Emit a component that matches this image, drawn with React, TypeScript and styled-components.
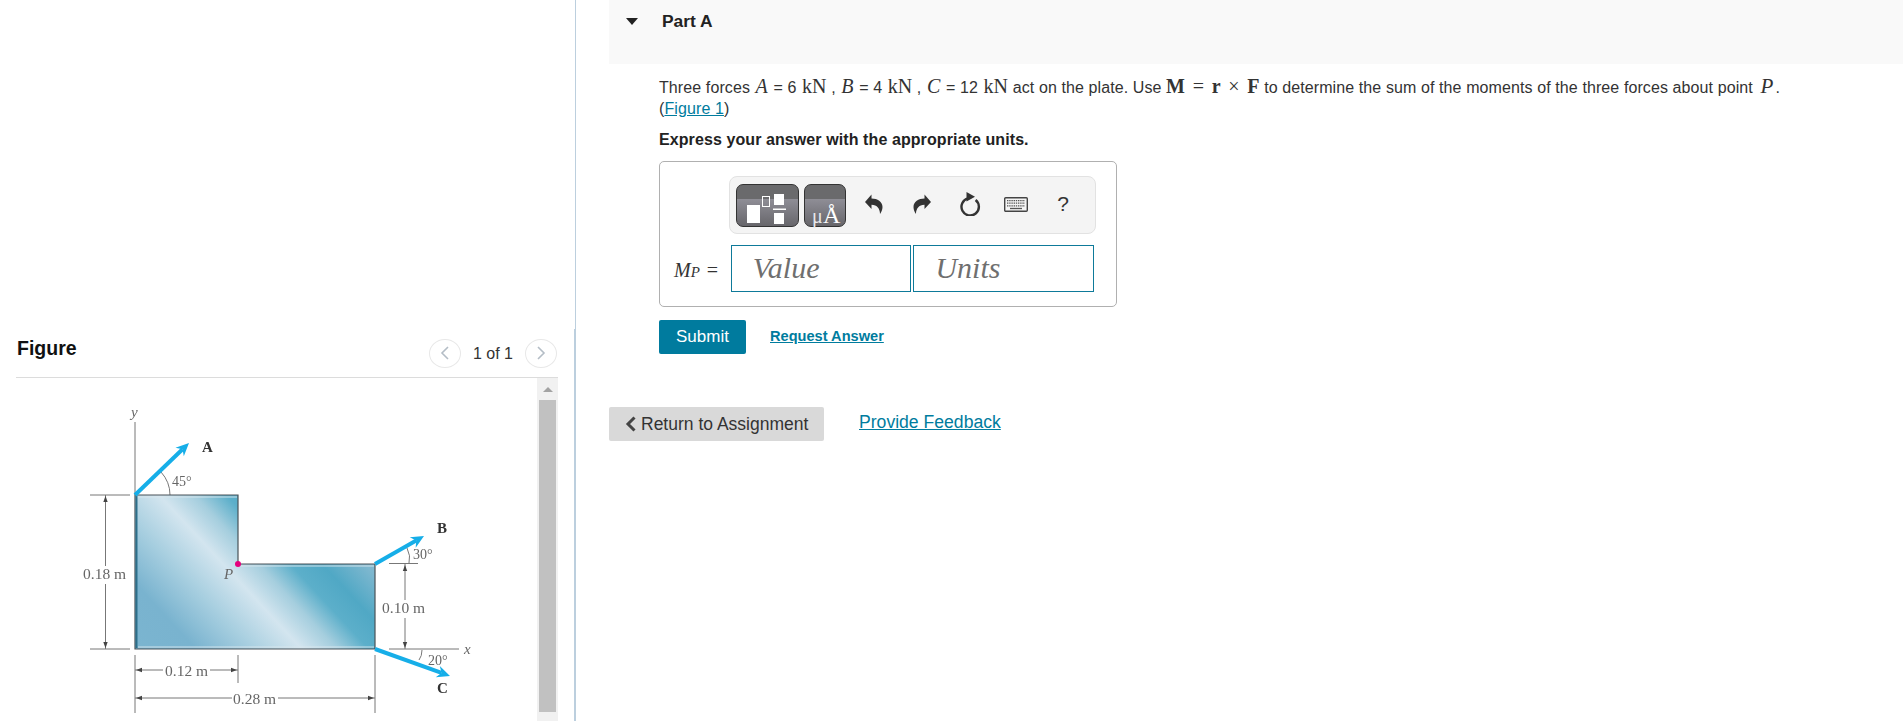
import React from "react";
import styled, { createGlobalStyle } from "styled-components";

const Global = createGlobalStyle`
  html, body { margin: 0; padding: 0; background: #fff; height: 100%; overflow: hidden; }
  body { font-family: "Liberation Sans", Arial, sans-serif; color: #333; }
`;

const Page = styled.div`
  display: flex;
  width: 1903px;
  height: 721px;
  overflow: hidden;
`;

const FigurePanel = styled.aside`
  box-sizing: border-box;
  width: 576px;
  height: 721px;
  padding-top: 329px;
  border-right: 1px solid #bccfde;
  display: flex;
`;

const FigureColumn = styled.div`
  box-sizing: border-box;
  width: 575px;
  padding: 0 16px;
  border-right: 1px solid #bccfde;
  display: flex;
  flex-direction: column;
`;

const FigureHeader = styled.header`
  display: flex;
  align-items: center;
  justify-content: space-between;
  height: 49px;
  box-sizing: border-box;
  border-bottom: 1px solid #dcdcdc;
`;

const FigureTitle = styled.h2`
  margin: 0 0 10px 1px;
  font-size: 19.5px;
  font-weight: 700;
  color: #111;
`;

const Pager = styled.div`
  display: flex;
  align-items: center;
  gap: 12px;
  padding-right: 1px;
`;

const PagerButton = styled.span`
  width: 32px;
  height: 29px;
  box-sizing: border-box;
  border: 1px solid #e8e8e8;
  border-radius: 50%;
  display: flex;
  align-items: center;
  justify-content: center;
  color: #b4bdc6;
`;

const PagerText = styled.span`
  font-size: 16px;
  color: #333;
  margin-top: 2px;
`;

const FigureBody = styled.div`
  position: relative;
  flex: 1;
  overflow: hidden;
`;

const Diagram = styled.svg`
  display: block;
  width: 521px;
  height: 343px;
  filter: blur(0.45px);
`;

const ScrollTrack = styled.div`
  position: absolute;
  right: 0;
  top: 0;
  bottom: 0;
  width: 21px;
  background: #f1f1f1;
  display: flex;
  flex-direction: column;
  align-items: center;
`;

const ScrollArrow = styled.span`
  margin-top: 9px;
  width: 0;
  height: 0;
  border-left: 5px solid transparent;
  border-right: 5px solid transparent;
  border-bottom: 5px solid #a3a3a3;
`;

const ScrollThumb = styled.div`
  margin-top: 8px;
  width: 17px;
  height: 312px;
  background: #c1c1c1;
`;

const Main = styled.main`
  flex: 1;
  padding-left: 33px;
  min-width: 0;
`;

const PartBar = styled.div`
  height: 64px;
  background: #f9f9f9;
  display: flex;
  align-items: flex-start;
  padding-top: 11px;
  box-sizing: border-box;
`;

const Caret = styled.span`
  margin: 7px 0 0 17px;
  width: 0;
  height: 0;
  border-left: 6.5px solid transparent;
  border-right: 6.5px solid transparent;
  border-top: 7px solid #222;
`;

const PartTitle = styled.span`
  margin-left: 24px;
  font-size: 17.4px;
  font-weight: 700;
  color: #222;
`;

const Content = styled.section`
  padding: 12px 0 0 50px;
`;

const Prompt = styled.p`
  margin: 0;
  font-size: 16px;
  letter-spacing: 0.1px;
  line-height: 20.5px;
  color: #333;
`;

const mathFont = `"Liberation Serif", "DejaVu Serif", serif`;

const MathVar = styled.span`
  font-family: ${mathFont};
  font-size: 20px;
  line-height: 1;
  font-style: italic;
  margin: 0 1px;
`;

const MathUnit = styled.span`
  font-family: ${mathFont};
  font-size: 20px;
  line-height: 1;
  margin-left: 1px;
`;

const MathOp = styled.span`
  font-family: ${mathFont};
  font-size: 20px;
  line-height: 1;
  margin: 0 2.5px;
`;

const MathBold = styled.span`
  font-family: ${mathFont};
  font-size: 20px;
  line-height: 1;
  font-weight: 700;
`;

const MathPoint = styled(MathVar)`
  font-size: 21px;
  margin: 0 2px 0 3px;
`;

const TextLink = styled.a`
  color: #007c9e;
  text-decoration: underline;
`;

const Instruction = styled.p`
  margin: 10px 0 0;
  font-size: 16px;
  letter-spacing: 0.09px;
  line-height: 21px;
  font-weight: 700;
  color: #222;
`;

const AnswerBox = styled.div`
  box-sizing: border-box;
  margin-top: 11px;
  width: 458px;
  height: 146px;
  border: 1px solid #b0b0b0;
  border-radius: 5px;
  padding: 14px 20px 0 14px;
`;

const Toolbar = styled.div`
  box-sizing: border-box;
  margin-left: 55px;
  width: 367px;
  height: 58px;
  background: #f4f4f4;
  border: 1px solid #e2e2e2;
  border-radius: 8px;
  display: flex;
  align-items: center;
  padding-left: 6px;
`;

const TemplateButton = styled.span<{ $w: number }>`
  box-sizing: border-box;
  width: ${(p) => p.$w}px;
  height: 43px;
  margin-right: 5px;
  border: 1px solid #333;
  border-radius: 7px;
  display: block;
  background: linear-gradient(#6a6a6c 0 14px, #8f8e96 14px, #67666b 100%);
`;

const ButtonGlyph = styled.svg`
  display: block;
  overflow: visible;
`;

const ToolIcon = styled.span<{ $w: number }>`
  width: ${(p) => p.$w}px;
  display: flex;
  justify-content: center;
  align-items: center;
  color: #333;
  margin-top: -2px;
`;

const Help = styled.span`
  width: 48px;
  text-align: center;
  font-size: 21px;
  color: #333;
  margin-top: -2px;
`;

const InputRow = styled.div`
  display: flex;
  align-items: center;
  margin-top: 11px;
`;

const VarLabel = styled.span`
  width: 57px;
  font-family: ${mathFont};
  font-size: 20px;
  color: #333;
  white-space: nowrap;
  padding-top: 3px;
`;

const VarSub = styled.span`
  font-size: 15px;
  font-style: italic;
  margin-right: 2px;
`;

const AnswerField = styled.div`
  box-sizing: border-box;
  width: 181px;
  height: 47px;
  margin-right: 2px;
  border: 1px solid #0e7a9a;
  padding-left: 21px;
  font-family: ${mathFont};
  font-size: 30px;
  font-style: italic;
  line-height: 44px;
  color: #6f6f6f;
`;

const SubmitRow = styled.div`
  display: flex;
  align-items: center;
  margin-top: 13px;
  gap: 24px;
`;

const SubmitButton = styled.button`
  width: 87px;
  height: 34px;
  padding: 0;
  border: none;
  border-radius: 2px;
  background: #007b9e;
  color: #fff;
  font: 17px "Liberation Sans", Arial, sans-serif;
`;

const RequestLink = styled(TextLink)`
  font-size: 14.6px;
  font-weight: 700;
  margin-top: -3px;
`;

const FooterRow = styled.div`
  display: flex;
  align-items: flex-start;
  margin-top: 53px;
  gap: 35px;
`;

const ReturnButton = styled.button`
  display: flex;
  align-items: center;
  gap: 4px;
  box-sizing: border-box;
  width: 215px;
  height: 34px;
  padding: 0 0 0 16px;
  border: none;
  border-radius: 2px;
  background: #d9d9d9;
  color: #333;
  font: 17.5px "Liberation Sans", Arial, sans-serif;
  white-space: nowrap;
`;

const FeedbackLink = styled(TextLink)`
  font-size: 17.6px;
  line-height: 30px;
`;

const Serif = styled.text<{ $size?: number; $bold?: boolean; $italic?: boolean }>`
  font-family: "Liberation Serif", serif;
  font-size: ${(p) => p.$size ?? 15.5}px;
  font-weight: ${(p) => (p.$bold ? 700 : 400)};
  font-style: ${(p) => (p.$italic ? "italic" : "normal")};
  fill: ${(p) => (p.$bold ? "#333" : "#666")};
`;

const Arrow = ({ x1, y1, x2, y2 }: { x1: number; y1: number; x2: number; y2: number }) => {
  const a = Math.atan2(y2 - y1, x2 - x1);
  const bx = x2 - Math.cos(a) * 13;
  const by = y2 - Math.sin(a) * 13;
  const nx = -Math.sin(a) * 6;
  const ny = Math.cos(a) * 6;
  const cx = x2 - Math.cos(a) * 9;
  const cy = y2 - Math.sin(a) * 9;
  return (
    <g>
      <line x1={x1} y1={y1} x2={cx} y2={cy} stroke="#16aee8" strokeWidth={4} />
      <polygon points={`${x2},${y2} ${bx + nx},${by + ny} ${cx},${cy} ${bx - nx},${by - ny}`} fill="#16aee8" />
    </g>
  );
};

const tick = (x: number, y: number, dir: "u" | "d" | "l" | "r") => {
  const s = 6;
  const w = 2.2;
  const p =
    dir === "u" ? `${x},${y} ${x - w},${y + s} ${x + w},${y + s}` :
    dir === "d" ? `${x},${y} ${x - w},${y - s} ${x + w},${y - s}` :
    dir === "l" ? `${x},${y} ${x + s},${y - w} ${x + s},${y + w}` :
    `${x},${y} ${x - s},${y - w} ${x - s},${y + w}`;
  return <polygon points={p} fill="#444" />;
};

const Figure = () => (
  <Diagram viewBox="16 378 521 343">
    <defs>
      <linearGradient id="plate" gradientUnits="userSpaceOnUse" x1="130" y1="654" x2="320" y2="478">
        <stop offset="0" stopColor="#7bb5d0" />
        <stop offset="0.2" stopColor="#79b3cf" />
        <stop offset="0.36" stopColor="#a8cfe0" />
        <stop offset="0.5" stopColor="#d3e5ef" />
        <stop offset="0.6" stopColor="#a5cede" />
        <stop offset="0.69" stopColor="#5cafca" />
        <stop offset="0.78" stopColor="#50a8c5" />
        <stop offset="0.9" stopColor="#7db7cf" />
        <stop offset="1" stopColor="#8cc0d5" />
      </linearGradient>
    </defs>
    <g stroke="#777" strokeWidth={1} fill="none">
      <line x1={135} y1={422} x2={135} y2={495} />
      <line x1={90} y1={495} x2={130} y2={495} />
      <line x1={90} y1={649} x2={130} y2={649} />
      <line x1={105.5} y1={495} x2={105.5} y2={566} />
      <line x1={105.5} y1={584} x2={105.5} y2={649} />
      <line x1={389} y1={563.5} x2={418} y2={563.5} />
      <line x1={405} y1={564} x2={405} y2={600} />
      <line x1={405} y1={618} x2={405} y2={649} />
      <line x1={389} y1={649} x2={459} y2={649} />
      <line x1={135} y1={655} x2={135} y2={713} />
      <line x1={238} y1={655} x2={238} y2={683} />
      <line x1={375} y1={655} x2={375} y2={713} />
      <line x1={135} y1={670} x2={163} y2={670} />
      <line x1={210} y1={670} x2={238} y2={670} />
      <line x1={135} y1={698} x2={232} y2={698} />
      <line x1={278} y1={698} x2={375} y2={698} />
      <path d="M161 472 Q170 482 170 495" />
      <path d="M407 548 Q411 556 409 563" />
      <path d="M422 650 Q422 656 419 660" />
    </g>
    {tick(105.5, 496, "u")}
    {tick(105.5, 648, "d")}
    {tick(405, 565, "u")}
    {tick(405, 648, "d")}
    {tick(136, 670, "l")}
    {tick(237, 670, "r")}
    {tick(136, 698, "l")}
    {tick(374, 698, "r")}
    <path d="M135 495 H238 V564 H375 V649 H135 Z" fill="url(#plate)" stroke="#4a5358" strokeWidth={1.2} />
    <path d="M137 497 H237 M239 566 H374 M138 647 H374" stroke="#d8e8ef" strokeWidth={1.6} fill="none" opacity={0.6} />
    <line x1={136.5} y1={496} x2={136.5} y2={648} stroke="#2c6f8a" strokeWidth={2} />
    <Arrow x1={135} y1={495} x2={189} y2={443} />
    <Arrow x1={375} y1={564} x2={424} y2={536} />
    <Arrow x1={375} y1={649} x2={450} y2={676} />
    <circle cx={238} cy={564} r={3} fill="#e5007d" />
    <Serif x={131} y={417} $italic $size={15}>y</Serif>
    <Serif x={202} y={452} $bold $size={15}>A</Serif>
    <Serif x={172} y={486} $size={14}>45°</Serif>
    <Serif x={83} y={579}>0.18 m</Serif>
    <Serif x={224} y={579} $italic $size={15}>P</Serif>
    <Serif x={437} y={533} $bold $size={15}>B</Serif>
    <Serif x={413} y={559} $size={14}>30°</Serif>
    <Serif x={382} y={613}>0.10 m</Serif>
    <Serif x={464} y={654} $italic $size={15}>x</Serif>
    <Serif x={428} y={665} $size={14}>20°</Serif>
    <Serif x={437} y={693} $bold $size={15}>C</Serif>
    <Serif x={165} y={676}>0.12 m</Serif>
    <Serif x={233} y={704}>0.28 m</Serif>
  </Diagram>
);

const ChevronL = () => (
  <svg width="10" height="16" viewBox="0 0 10 16"><path d="M8 2 L2 8 L8 14" fill="none" stroke="currentColor" strokeWidth="1.6" /></svg>
);
const ChevronR = () => (
  <svg width="10" height="16" viewBox="0 0 10 16"><path d="M2 2 L8 8 L2 14" fill="none" stroke="currentColor" strokeWidth="1.6" /></svg>
);

const FractionGlyph = () => (
  <ButtonGlyph width="61" height="41" viewBox="0 0 61 41">
    <rect x="10" y="20" width="13" height="18" fill="#fff" />
    <rect x="25.5" y="11.5" width="7" height="10" fill="none" stroke="#fff" strokeWidth="1" />
    <rect x="37" y="9" width="10" height="11" fill="#fff" />
    <rect x="36" y="23.5" width="13" height="1.5" fill="#fff" />
    <rect x="37" y="28" width="10" height="11" fill="#fff" />
  </ButtonGlyph>
);

const UnitGlyph = () => (
  <ButtonGlyph width="40" height="41" viewBox="0 0 40 41">
    <text x="7" y="38" fontFamily="Liberation Serif, serif" fontSize="20" fill="#e8e8ea">μ</text>
    <text x="18" y="38" fontFamily="Liberation Serif, serif" fontSize="24" fill="#fff">Å</text>
  </ButtonGlyph>
);

const TurnIcon = styled.svg<{ $flip?: boolean }>`
  transform: ${(p) => (p.$flip ? "scaleX(-1)" : "none")};
`;

const UndoIcon = ({ flip }: { flip?: boolean }) => (
  <TurnIcon $flip={flip} width="18" height="20" viewBox="0 0 18 20">
    <path d="M0 8 L6.5 0.5 V4.6 C12.5 4.6 17.5 8 17.5 13 C17.5 15.6 16.4 18 15 20 C15 15 12.2 10.8 6.5 10.8 V15 Z" fill="currentColor" />
  </TurnIcon>
);

const RefreshIcon = () => (
  <svg width="22" height="24" viewBox="0 0 22 24">
    <path d="M16.6 8 A8.7 8.7 0 1 1 9 6.4" fill="none" stroke="currentColor" strokeWidth="2.4" />
    <polygon points="7.5,0 16,4.8 7.5,9.5" fill="currentColor" />
  </svg>
);

const KeyboardIcon = () => (
  <svg width="24" height="15" viewBox="0 0 24 15">
    <rect x="0.7" y="0.7" width="22.6" height="13.6" rx="1" fill="#f4f4f4" stroke="#444" strokeWidth="1.4" />
    <g stroke="#555" strokeWidth="1.2" strokeDasharray="1.4 0.8">
      <line x1="3" y1="3.6" x2="21" y2="3.6" />
      <line x1="3" y1="6.2" x2="21" y2="6.2" />
      <line x1="3" y1="8.8" x2="21" y2="8.8" />
    </g>
    <line x1="6" y1="11.5" x2="18" y2="11.5" stroke="#555" strokeWidth="1.3" />
  </svg>
);

const BackChevron = () => (
  <svg width="12" height="16" viewBox="0 0 12 16"><path d="M9.5 1.5 L3 8 L9.5 14.5" fill="none" stroke="#444" strokeWidth="3" /></svg>
);

export default function App() {
  return (
    <Page>
      <Global />
      <FigurePanel>
        <FigureColumn>
          <FigureHeader>
            <FigureTitle>Figure</FigureTitle>
            <Pager>
              <PagerButton><ChevronL /></PagerButton>
              <PagerText>1 of 1</PagerText>
              <PagerButton><ChevronR /></PagerButton>
            </Pager>
          </FigureHeader>
          <FigureBody>
            <Figure />
            <ScrollTrack>
              <ScrollArrow />
              <ScrollThumb />
            </ScrollTrack>
          </FigureBody>
        </FigureColumn>
      </FigurePanel>
      <Main>
        <PartBar>
          <Caret />
          <PartTitle>Part A</PartTitle>
        </PartBar>
        <Content>
          <Prompt>
            Three forces <MathVar>A</MathVar> = 6 <MathUnit>kN</MathUnit> , <MathVar>B</MathVar> = 4 <MathUnit>kN</MathUnit> , <MathVar>C</MathVar> = 12 <MathUnit>kN</MathUnit> act on the plate. Use <MathBold>M</MathBold><MathOp> = </MathOp><MathBold>r</MathBold><MathOp> × </MathOp><MathBold>F</MathBold> to determine the sum of the moments of the three forces about point <MathPoint>P</MathPoint>.
            <br />
            (<TextLink>Figure 1</TextLink>)
          </Prompt>
          <Instruction>Express your answer with the appropriate units.</Instruction>
          <AnswerBox>
            <Toolbar>
              <TemplateButton $w={63}><FractionGlyph /></TemplateButton>
              <TemplateButton $w={42}><UnitGlyph /></TemplateButton>
              <ToolIcon $w={46}><UndoIcon /></ToolIcon>
              <ToolIcon $w={50}><UndoIcon flip /></ToolIcon>
              <ToolIcon $w={45}><RefreshIcon /></ToolIcon>
              <ToolIcon $w={47}><KeyboardIcon /></ToolIcon>
              <Help>?</Help>
            </Toolbar>
            <InputRow>
              <VarLabel><i>M</i><VarSub>P</VarSub> =</VarLabel>
              <AnswerField>Value</AnswerField>
              <AnswerField>Units</AnswerField>
            </InputRow>
          </AnswerBox>
          <SubmitRow>
            <SubmitButton>Submit</SubmitButton>
            <RequestLink>Request Answer</RequestLink>
          </SubmitRow>
        </Content>
        <FooterRow>
          <ReturnButton><BackChevron />Return to Assignment</ReturnButton>
          <FeedbackLink>Provide Feedback</FeedbackLink>
        </FooterRow>
      </Main>
    </Page>
  );
}
